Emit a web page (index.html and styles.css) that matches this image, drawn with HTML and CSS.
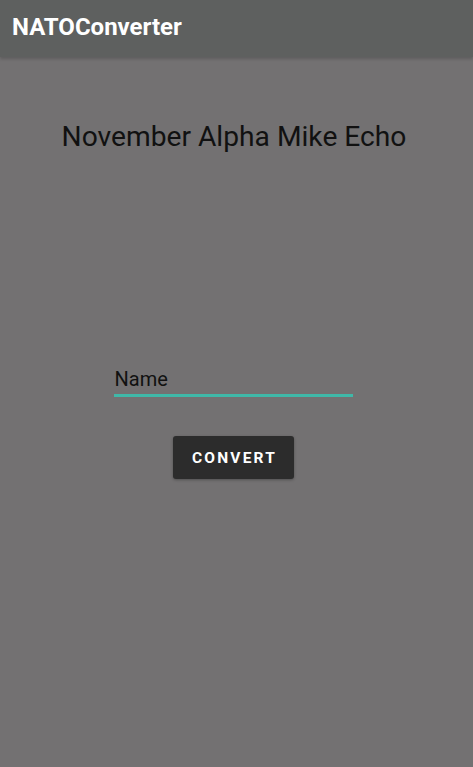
FILE: index.html
```html
<!DOCTYPE html>
<html>
<head>
<meta charset="utf-8">
<link rel="stylesheet" href="styles.css">
</head>
<body>
<div class="app">
  <header class="toolbar"><span class="title">NATOConverter</span></header>
  <main class="content">
    <p class="result">November Alpha Mike Echo</p>
    <div class="field"><span class="field-text">Name</span></div>
    <button class="convert">CONVERT</button>
  </main>
</div>
</body>
</html>
```
FILE: styles.css
```css
html, body {
  margin: 0;
  padding: 0;
  background: #737172;
  font-family: Roboto, "Noto Sans", sans-serif;
}
.app {
  width: 473px;
  height: 767px;
  display: flex;
  flex-direction: column;
  background: #737172;
}
.toolbar {
  height: 57px;
  background: #5e605f;
  display: flex;
  align-items: center;
  padding-left: 12px;
  box-shadow: 0 2px 3px rgba(0,0,0,0.18);
  position: relative;
  z-index: 1;
}
.title {
  color: #ffffff;
  font-weight: 700;
  font-size: 24px;
  margin-top: -4px;
}
.content {
  display: flex;
  flex-direction: column;
  align-items: center;
}
.result {
  margin: 65px 0 0 0;
  font-size: 28.2px;
  color: #111111;
  line-height: 30px;
  padding-right: 5px;
}
.field {
  margin-top: 216px;
  width: 239px;
  margin-left: -7px;
  border-bottom: 3px solid #3fb8a8;
  padding-bottom: 4px;
}
.field-text {
  font-size: 20px;
  color: #111111;
  padding-left: 1px;
  line-height: 22px;
}
.convert {
  margin-top: 39px;
  margin-left: -6px;
  width: 121px;
  height: 43px;
  background: #2c2c2c;
  border: none;
  border-radius: 3px;
  color: #ffffff;
  font-family: Roboto, "Noto Sans", sans-serif;
  font-weight: 700;
  font-size: 15.5px;
  letter-spacing: 2.2px;
  box-shadow: 0 1px 3px rgba(0,0,0,0.3);
  padding: 0 0 0 2px;
}
```
